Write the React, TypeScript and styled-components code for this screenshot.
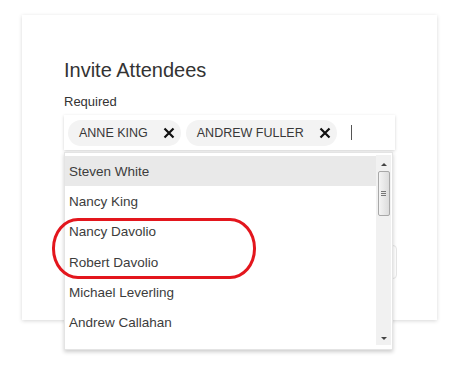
import React from 'react';
import styled, { createGlobalStyle } from 'styled-components';

const GlobalStyle = createGlobalStyle`
  html, body {
    margin: 0;
    background: #ffffff;
    font-family: "Liberation Sans", Arial, sans-serif;
  }
`;

const Page = styled.div`
  min-height: 376px;
  box-sizing: border-box;
  padding: 15px 0 0 22px;
`;

const Card = styled.div`
  position: relative;
  width: 415px;
  height: 305px;
  box-sizing: border-box;
  padding: 43px 42px 0 42px;
  background: #fff;
  box-shadow: 0 1px 4px rgba(0, 0, 0, 0.16);
`;

const Title = styled.h2`
  margin: 0;
  font-size: 20px;
  line-height: 24px;
  font-weight: normal;
  color: #333;
`;

const Label = styled.div`
  margin-top: 12px;
  font-size: 13px;
  line-height: 16px;
  color: #333;
`;

const Field = styled.div`
  position: relative;
  z-index: 2;
  margin-top: 5px;
`;

const InputBox = styled.div`
  height: 35px;
  box-sizing: border-box;
  padding: 5px 4px;
  display: flex;
  align-items: center;
  gap: 5px;
  background: #fff;
  box-shadow: 0 1px 3px rgba(0, 0, 0, 0.18);
`;

const Chip = styled.div`
  height: 26px;
  box-sizing: border-box;
  padding: 0 6px 0 11px;
  display: flex;
  align-items: center;
  gap: 15px;
  border-radius: 13px;
  background: #f3f3f3;
  font-size: 12.5px;
  color: #383838;
`;

const Caret = styled.span`
  width: 1px;
  height: 15px;
  margin-left: 9px;
  background: #555;
`;

const Dropdown = styled.div`
  position: absolute;
  top: 37px;
  left: 0;
  width: 329px;
  height: 198px;
  box-sizing: border-box;
  display: flex;
  background: #fff;
  border: 1px solid #e4e4e4;
  box-shadow: 0 2px 4px rgba(0, 0, 0, 0.2);
`;

const List = styled.ul`
  flex: 1;
  margin: 0;
  padding: 3px 0 0 0;
  list-style: none;
`;

const Item = styled.li<{ $active?: boolean }>`
  height: 30.3px;
  display: flex;
  align-items: center;
  padding-left: 4px;
  font-size: 13.5px;
  color: #3c3c3c;
  background: ${p => (p.$active ? '#e9e9e9' : 'transparent')};
`;

const Scrollbar = styled.div`
  width: 15px;
  margin: 2px 1px 4px 0;
  display: flex;
  flex-direction: column;
  align-items: center;
  background: #f1f1f1;
`;

const Arrow = styled.div<{ $down?: boolean }>`
  width: 0;
  height: 0;
  margin: 8px 0 5px;
  border-left: 3px solid transparent;
  border-right: 3px solid transparent;
  ${p => (p.$down ? 'border-top: 3px solid #444;' : 'border-bottom: 3px solid #444;')}
  ${p => p.$down && 'margin-top: auto;'}
`;

const Thumb = styled.div`
  width: 12px;
  height: 45px;
  box-sizing: border-box;
  border: 1px solid #a8a8a8;
  border-radius: 2px;
  background: linear-gradient(to right, #f4f4f4, #dcdcdc);
  display: flex;
  flex-direction: column;
  align-items: center;
  justify-content: center;
  gap: 1px;
`;

const Grip = styled.span`
  width: 5px;
  height: 1px;
  background: #777;
`;

const Annotation = styled.div`
  position: absolute;
  left: -13px;
  top: 65px;
  width: 204px;
  height: 61px;
  box-sizing: border-box;
  border: 3px solid #e3161d;
  border-radius: 26px / 30px;
  pointer-events: none;
`;

const ButtonRow = styled.div`
  display: flex;
  justify-content: flex-end;
  margin-top: 95px;
  margin-right: -2px;
`;

const GhostButton = styled.button`
  width: 90px;
  height: 34px;
  border: 1px solid #e6e6e6;
  border-radius: 4px;
  background: #fff;
  font-family: inherit;
  color: #333;
`;

const CloseIcon = () => (
  <svg width="12" height="12" viewBox="0 0 12 12">
    <path d="M1.5 1.5 L10.5 10.5 M10.5 1.5 L1.5 10.5" stroke="#111" strokeWidth="2.2" strokeLinecap="butt" />
  </svg>
);

const people = ['Steven White', 'Nancy King', 'Nancy Davolio', 'Robert Davolio', 'Michael Leverling', 'Andrew Callahan'];

const App: React.FC = () => {
  return (
    <Page>
      <GlobalStyle />
      <Card>
        <Title>Invite Attendees</Title>
        <Label>Required</Label>
        <Field>
          <InputBox>
            <Chip>
              ANNE KING
              <CloseIcon />
            </Chip>
            <Chip>
              ANDREW FULLER
              <CloseIcon />
            </Chip>
            <Caret />
          </InputBox>
          <Dropdown>
            <List>
              {people.map((name, i) => (
                <Item key={name} $active={i === 0}>
                  {name}
                </Item>
              ))}
            </List>
            <Scrollbar>
              <Arrow />
              <Thumb>
                <Grip />
                <Grip />
                <Grip />
              </Thumb>
              <Arrow $down />
            </Scrollbar>
            <Annotation />
          </Dropdown>
        </Field>
        <ButtonRow>
          <GhostButton>Send</GhostButton>
        </ButtonRow>
      </Card>
    </Page>
  );
};

export default App;
